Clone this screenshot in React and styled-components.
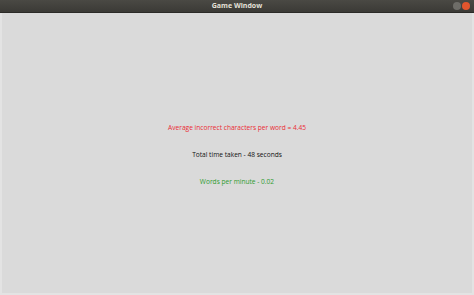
import React from 'react';
import styled, { createGlobalStyle } from 'styled-components';

const GlobalStyle = createGlobalStyle`
    html, body {
        margin: 0;
        padding: 0;
        background: #dadada;
    }
`;

const Window = styled.div`
    display: flex;
    flex-direction: column;
    width: 474px;
    height: 295px;
    overflow: hidden;
    font-family: "Open Sans", "DejaVu Sans", sans-serif;
`;

const TitleBar = styled.div`
    position: relative;
    display: flex;
    align-items: center;
    justify-content: center;
    height: 12px;
    flex-shrink: 0;
    background: linear-gradient(#4a4944, #3b3a36);
    border-bottom: 1px solid #2b2a27;
`;

const Title = styled.span`
    color: #e4e0d8;
    font-size: 7px;
    font-weight: 700;
    line-height: 12px;
`;

const Controls = styled.div`
    position: absolute;
    right: 4px;
    top: 2px;
    display: flex;
    gap: 1px;
`;

const Dot = styled.span`
    display: block;
    width: 8px;
    height: 8px;
    border-radius: 50%;
    background: ${(props) => props.color};
`;

const Body = styled.div`
    flex: 1;
    display: flex;
    flex-direction: column;
    align-items: center;
    padding-top: 108px;
    gap: 13px;
    background: #dadada;
    border-left: 2px solid #e3e3e3;
    border-right: 2px solid #e3e3e3;
    border-bottom: 2px solid #e3e3e3;
`;

const Line = styled.div`
    font-size: 6.6px;
    font-weight: 500;
    line-height: 14px;
    color: ${(props) => props.color};
`;

const App = () => (
    <>
        <GlobalStyle />
        <Window>
            <TitleBar>
                <Title>Game Window</Title>
                <Controls>
                    <Dot color="#6e6d68" />
                    <Dot color="#e2552d" />
                </Controls>
            </TitleBar>
            <Body>
                <Line color="#ea2a33">Average incorrect characters per word = 4.45</Line>
                <Line color="#111111">Total time taken - 48 seconds</Line>
                <Line color="#2f9a2f">Words per minute - 0.02</Line>
            </Body>
        </Window>
    </>
);

export default App;
